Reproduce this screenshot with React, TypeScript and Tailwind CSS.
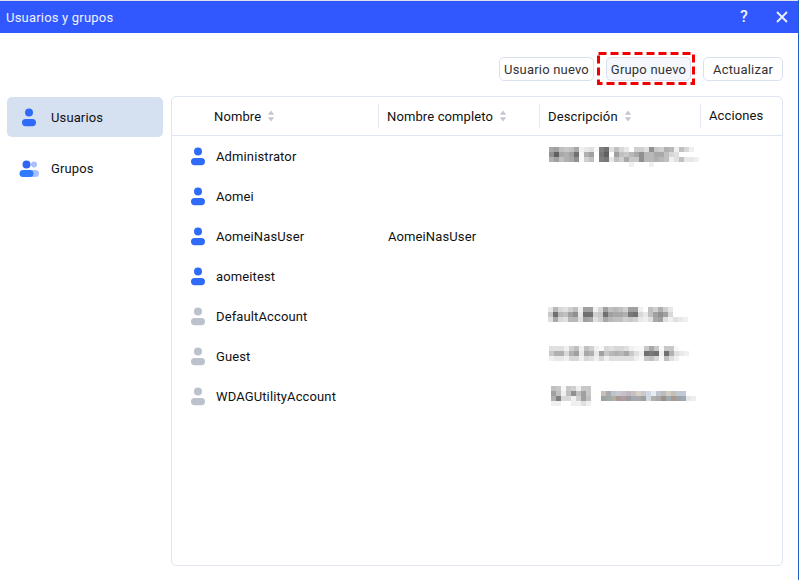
import React from "react";

const admin = [
  "a8 a0 c0 c8 c0 a8 f0 e8 e0 f8 80 70 e0 c0 d8 e8 ff d0 d0 e0 90 c8 d0 b0 b8 f0 c0 d8 f0 ff",
  "90 60 a8 b0 a0 70 f8 b0 a0 ff 78 60 ff a0 c0 c8 b8 a8 90 b8 b8 a8 a8 c0 d8 e0 ff ff ff ff",
  "b0 a0 c0 b0 a8 90 f8 d0 c0 ff 80 78 e8 c0 d0 a8 c8 c8 90 b8 b8 b0 b8 c0 f0 e0 c0 e8 e8 f0",
  "ff ff ff ff ff ff ff ff ff ff ff ff ff ff ff ff f0 ff ff ff f0 ff ff ff ff ff ff ff ff ff",
];
const def = [
  "e8 b8 d8 e0 d0 c0 f0 a0 a0 f0 d8 a0 c0 b8 c0 d0 a0 a0 f0 ff c0 d0 b0 d0 e8 ff ff ff ff ff",
  "c8 70 b8 c0 a0 90 e8 70 70 d0 c8 70 a0 a8 a8 b0 78 70 d8 e8 c0 a0 90 a0 d8 ff ff ff ff ff",
  "e0 a8 d8 e0 b8 b8 e0 a0 a8 e0 d0 a8 b8 c0 c0 d0 c8 d0 e8 f0 e0 a8 a0 e0 f0 e0 e8 f0 ff ff",
];
const guest = [
  "e0 e0 e0 f0 d0 c0 f0 c0 d0 f0 f8 d8 e0 d8 d8 e0 f0 f8 f8 c8 a8 c8 f8 c8 c8 f8 ff ff",
  "c8 b0 b0 d8 b0 a0 e8 a8 b0 e8 a0 c8 b8 b0 b8 a8 c8 e0 f0 70 78 70 f0 70 b0 e0 e8 f0",
  "f0 e8 e8 f0 d8 d8 f0 d8 e0 f0 d8 f0 e0 e0 e0 e0 e0 f0 f8 c8 c0 d8 f8 c0 e0 f0 ff ff",
];
const wdag = [
  "c0 c8 f8 c8 d0 f0 c8 c8 ff ff",
  "a0 c0 f0 c0 90 c0 a0 c8 ff ff c8c0b4 a8a8b0 b8c8c8 c8c8d0 c8c0c8 c0b8c0 c8c0c0 d8d0c8 c8c8d0 d0d8e0 e8ecf4 c0c4cc b8bcc0 d0ccc0 c4c0b8 c0c8d0 c0c8dc",
  "b0 80 d8 d8 f0 d0 a0 c0 ff ff a0a0a0 a0a8a8 b0b0a0 a89898 b09ca0 a09aa0 a0a8b0 a8a8b0 a0a09c d0d8e4 b0b0a8 a8a8a8 a09088 a0a8b0 a89890 a0a0a8 a0a8b8 e8e8e8 e8f0f0",
  "f0 f0 ff ff f0 f0 e0 f0 ff ff",
];

function Blur({ rows, className = "" }: { rows: string[]; className?: string }) {
  const cells = rows.map((r) => r.split(" "));
  return (
    <svg width={155} height={rows.length * 5} shapeRendering="crispEdges" className={`block ${className}`}>
      {cells.map((row, y) =>
        row.map((g, x) =>
          g === "ff" ? null : (
            <rect key={`${x}-${y}`} x={x * 5} y={y * 5} width={5} height={5} fill={g.length === 6 ? `#${g}` : `#${g}${g}${g}`} />
          )
        )
      )}
    </svg>
  );
}

function UserIcon({ color }: { color: string }) {
  return (
    <svg width={16} height={19} viewBox="0 0 16 19" className="block shrink-0">
      <circle cx="8" cy="4.6" r="4" fill={color} />
      <rect x="1" y="11" width="14" height="7.2" rx="3.6" fill={color} />
    </svg>
  );
}

function GroupIcon() {
  return (
    <svg width={20} height={18} viewBox="0 0 20 18" className="block shrink-0">
      <circle cx="15" cy="4.5" r="3" fill="#a9c0fb" />
      <rect x="10" y="10" width="10" height="7" rx="3.5" fill="#a9c0fb" />
      <circle cx="7.5" cy="4.5" r="4" fill="#2f66f6" />
      <rect x="0.5" y="10" width="14" height="7" rx="3.5" fill="#2f7bff" />
    </svg>
  );
}

function Sort() {
  return (
    <svg width={8} height={12} viewBox="0 0 8 12" className="block shrink-0">
      <path d="M4 0.5 L7.2 4.8 H0.8 Z" fill="#c4c8ce" />
      <path d="M4 11.5 L7.2 7.2 H0.8 Z" fill="#c4c8ce" />
    </svg>
  );
}

function Btn({ children, className = "" }: { children: React.ReactNode; className?: string }) {
  return (
    <button className={`h-6 rounded-[5px] border border-[#d9e1ef] pt-px text-[13px] font-[450] tracking-[0.2px] text-[#333] ${className}`}>
      {children}
    </button>
  );
}

type User = { n: string; c: string; f?: string; d?: string[]; m?: string };
const users: User[] = [
  { n: "Administrator", c: "#2f6bf6", d: admin, m: "mt-[11px]" },
  { n: "Aomei", c: "#2f6bf6" },
  { n: "AomeiNasUser", c: "#2f6bf6", f: "AomeiNasUser" },
  { n: "aomeitest", c: "#2f6bf6" },
  { n: "DefaultAccount", c: "#bcc2cb", d: def, m: "mt-[11px] -ml-px" },
  { n: "Guest", c: "#bcc2cb", d: guest, m: "mt-[10px]" },
  { n: "WDAGUtilityAccount", c: "#bcc2cb", d: wdag, m: "mt-[10px] ml-[2px]" },
];

function Head({ label, sort = true, first = false }: { label: string; sort?: boolean; first?: boolean }) {
  return (
    <div className={`flex h-6 items-center gap-[6px] ${first ? "pl-[42px]" : "border-l border-[#e6ebf3] pl-2"}`}>
      <span className={sort ? "pt-px" : ""}>{label}</span>
      {sort && <Sort />}
    </div>
  );
}

export default function App() {
  return (
    <div className="flex h-[580px] w-[799px] flex-col overflow-hidden border-r border-[#1f5fc4] bg-white font-['Roboto','Liberation_Sans',sans-serif] text-[13px] font-[450] tracking-[0.12px] text-[#111]">
      <div className="h-px bg-[#dfe3e8]" />
      <header className="flex h-8 items-center justify-between bg-[#3158ff] pl-[6px] pr-[10px] text-[13px] font-normal tracking-[0.2px] text-[#eef2ff]">
        <span className="pt-px">Usuarios y grupos</span>
        <div className="flex items-center gap-[28px]">
          <span className="text-[16px] font-medium leading-none">?</span>
          <svg width="12" height="12" viewBox="0 0 12 12" className="block">
            <path d="M1 1 L11 11 M11 1 L1 11" stroke="#eef2ff" strokeWidth="1.8" />
          </svg>
        </div>
      </header>

      <div className="flex justify-end gap-3 pr-[15px] pt-6">
        <Btn className="w-[95px]">Usuario nuevo</Btn>
        <div className="relative">
          <Btn className="w-[85px] bg-[#f5f7fd]">Grupo nuevo</Btn>
          <svg width="98" height="33" className="absolute -left-[9px] -top-[5px] block">
            <rect x="1.5" y="1.5" width="95" height="30" fill="none" stroke="#f00000" strokeWidth="3" strokeDasharray="8 4" />
          </svg>
        </div>
        <Btn className="w-20">Actualizar</Btn>
      </div>

      <div className="flex flex-1 gap-2 pb-[14px] pl-[7px] pr-[15px] pt-[15px]">
        <aside className="flex w-[156px] flex-col gap-3 pt-px">
          <div className="flex h-10 items-center gap-[14px] rounded-[5px] bg-[#d5e0f0] pl-[14px]">
            <UserIcon color="#2f6bf6" />
            <span className="pt-px">Usuarios</span>
          </div>
          <div className="flex h-10 items-center gap-[11px] pl-[12px]">
            <GroupIcon />
            <span className="-mt-px ml-px">Grupos</span>
          </div>
        </aside>

        <main className="flex-1 rounded-[5px] border border-[#dfe6f2]">
          <div className="grid h-[39px] grid-cols-[206px_161px_161px_1fr] items-center border-b border-[#dfe6f2]">
            <Head label="Nombre" first />
            <Head label="Nombre completo" />
            <Head label="Descripción" />
            <Head label="Acciones" sort={false} />
          </div>
          {users.map((u) => (
            <div key={u.n} className="grid h-10 grid-cols-[206px_161px_161px_1fr]">
              <div className="flex items-center gap-[10px] pl-[18px]">
                <UserIcon color={u.c} />
                <span className="pt-[2px]">{u.n}</span>
              </div>
              <div className="flex items-center pl-[10px]">
                <span className="pt-[2px]">{u.f}</span>
              </div>
              <div className="pl-[10px]">{u.d && <Blur rows={u.d} className={u.m} />}</div>
              <div />
            </div>
          ))}
        </main>
      </div>
    </div>
  );
}
